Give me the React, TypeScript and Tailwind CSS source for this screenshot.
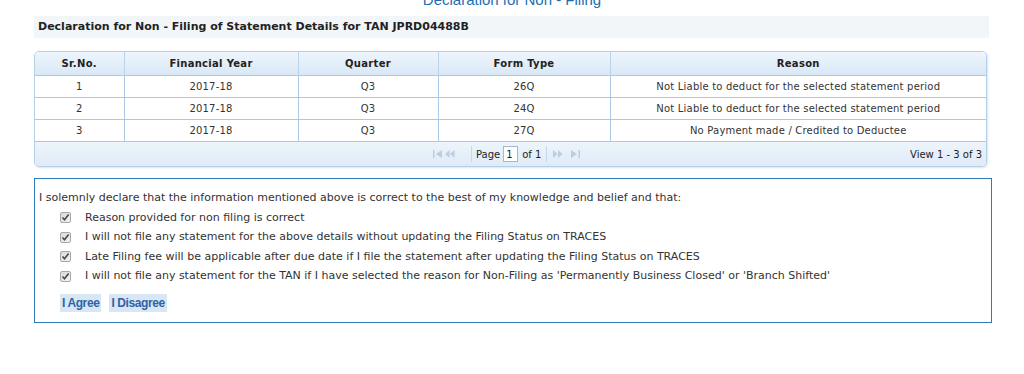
const rows = [
  { sr: "1", fy: "2017-18", q: "Q3", form: "26Q", reason: "Not Liable to deduct for the selected statement period" },
  { sr: "2", fy: "2017-18", q: "Q3", form: "24Q", reason: "Not Liable to deduct for the selected statement period" },
  { sr: "3", fy: "2017-18", q: "Q3", form: "27Q", reason: "No Payment made / Credited to Deductee" },
];

const points = [
  "Reason provided for non filing is correct",
  "I will not file any statement for the above details without updating the Filing Status on TRACES",
  "Late Filing fee will be applicable after due date if I file the statement after updating the Filing Status on TRACES",
  "I will not file any statement for the TAN if I have selected the reason for Non-Filing as 'Permanently Business Closed' or 'Branch Shifted'",
];

function CheckBox() {
  return (
    <svg width="11" height="11" viewBox="0 0 11 11" className="shrink-0">
      <defs>
        <linearGradient id="cbg" x1="0" y1="0" x2="1" y2="1">
          <stop offset="0" stopColor="#d8d8d8" />
          <stop offset="1" stopColor="#f4f4f4" />
        </linearGradient>
      </defs>
      <rect x="0.5" y="0.5" width="10" height="10" rx="1.5" fill="url(#cbg)" stroke="#a8a8a8" />
      <path d="M2.5 5.5 L4.5 7.8 L8.6 2.6" fill="none" stroke="#4a4a4a" strokeWidth="1.6" />
    </svg>
  );
}

function PagerIcon({ d }: { d: string }) {
  return (
    <svg width="10" height="8" viewBox="0 0 10 8" className="opacity-60">
      <path d={d} fill="#9fb8d2" />
    </svg>
  );
}

export default function App() {
  return (
    <main className="h-[374px] w-[1024px] overflow-hidden bg-white font-['DejaVu_Sans',sans-serif] text-[#333]">
      {/* page title, scrolled off the top */}
      <h1 className="-mt-[9px] h-[17px] text-center font-['Liberation_Sans',sans-serif] text-[15px] leading-[17px] text-[#1c6fb5]">
        Declaration for Non - Filing
      </h1>

      <div className="ml-[34px] w-[958px]">
        {/* sub heading bar */}
        <div className="mt-[8px] flex h-[22px] w-[955px] items-center bg-[#f3f6f9] pl-[4px] text-[11px] font-bold text-[#222]">
          Declaration for Non - Filing of Statement Details for TAN JPRD04488B
        </div>

        {/* grid */}
        <div className="mt-[13px] w-[953px] overflow-hidden rounded-[5px] border border-[#b3cfe9] shadow-[1px_1px_2px_rgba(150,180,210,0.35)]">
          <table className="w-full table-fixed border-collapse text-[10px] tracking-[0.2px] text-[#333]">
            <colgroup>
              <col className="w-[89px]" />
              <col className="w-[174px]" />
              <col className="w-[140px]" />
              <col className="w-[172px]" />
              <col />
            </colgroup>
            <thead>
              <tr className="h-[23px] bg-gradient-to-b from-[#eef5fc] to-[#d9e8f6] font-bold tracking-[0.3px] text-[#222]">
                <th className="border-r border-[#b8d3ec]">Sr.No.</th>
                <th className="border-r border-[#b8d3ec]">Financial Year</th>
                <th className="border-r border-[#b8d3ec]">Quarter</th>
                <th className="border-r border-[#b8d3ec]">Form Type</th>
                <th>Reason</th>
              </tr>
            </thead>
            <tbody>
              {rows.map((r) => (
                <tr key={r.sr} className="h-[22px] border-t border-[#a9c9e6] bg-white text-center">
                  <td className="border-r border-[#a9c9e6]">{r.sr}</td>
                  <td className="border-r border-[#a9c9e6]">{r.fy}</td>
                  <td className="border-r border-[#a9c9e6]">{r.q}</td>
                  <td className="border-r border-[#a9c9e6]">{r.form}</td>
                  <td>{r.reason}</td>
                </tr>
              ))}
            </tbody>
          </table>

          {/* pager */}
          <div className="relative flex h-[25px] items-center border-t border-[#a9c9e6] bg-gradient-to-b from-[#edf4fb] to-[#dfebf7] text-[10px] text-[#222]">
            <div className="ml-[398px] flex items-center">
              <PagerIcon d="M0 0 H1.5 V8 H0 Z M9 0 V8 L3 4 Z" />
              <span className="w-[2px]" />
              <PagerIcon d="M4.5 0 V8 L0 4 Z M9.5 0 V8 L5 4 Z" />
              <span className="ml-[16px] mr-[4px] h-[16px] w-px bg-[#c6d8ea]" />
              <span>Page</span>
              <span className="ml-[3px] flex h-[16px] w-[15px] items-center border border-[#a6b8c9] bg-white pl-[2px]">1</span>
              <span className="ml-[4px]">of 1</span>
              <span className="ml-[5px] mr-[6px] h-[16px] w-px bg-[#c6d8ea]" />
              <PagerIcon d="M0 0 V8 L4.5 4 Z M5 0 V8 L9.5 4 Z" />
              <span className="w-[8px]" />
              <PagerIcon d="M0 0 V8 L6 4 Z M7.5 0 H9 V8 H7.5 Z" />
            </div>
            <span className="ml-auto mr-[4px]">View 1 - 3 of 3</span>
          </div>
        </div>

        {/* declaration */}
        <div className="mt-[11px] h-[145px] w-[958px] border border-[#2f7ab8] pt-[12px] text-[11px] text-[#333]">
          <p className="pl-[4px] leading-[14px]">
            I solemnly declare that the information mentioned above is correct to the best of my knowledge and belief and that:
          </p>
          <ul className="mt-[3px] flex flex-col">
            {points.map((p) => (
              <li key={p} className="flex h-[19.5px] items-center pl-[25px]">
                <CheckBox />
                <span className="ml-[14px]">{p}</span>
              </li>
            ))}
          </ul>
          <div className="ml-[25px] mt-[8px] flex gap-[8px] font-['Liberation_Sans',sans-serif] text-[12px] font-bold tracking-[-0.4px] text-[#2e63a6]">
            <button className="h-[18px] bg-[#d9e7f4] px-[2px]">I Agree</button>
            <button className="h-[18px] bg-[#d9e7f4] px-[2px]">I Disagree</button>
          </div>
        </div>
      </div>
    </main>
  );
}
